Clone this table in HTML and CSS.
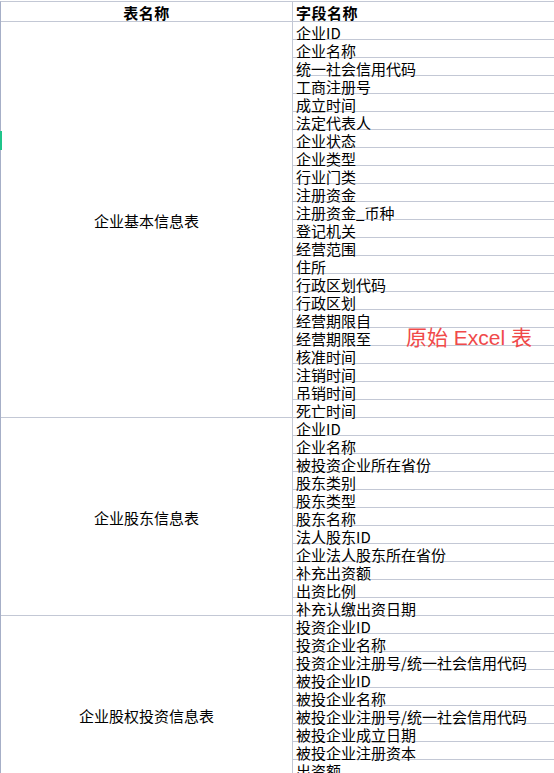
FILE: index.html
```html
<!DOCTYPE html>
<html lang="zh-CN">
<head>
<meta charset="utf-8">
<title>原始 Excel 表</title>
<link rel="stylesheet" href="styles.css">
</head>
<body>
<div class="sheet">
  <div class="row-head">
    <div class="cell-a head-a">表名称</div>
    <div class="cell-b head-b">字段名称</div>
  </div>

  <div class="group">
    <div class="label">企业基本信息表</div>
    <div class="fields">
      <div class="field">企业ID</div>
      <div class="field">企业名称</div>
      <div class="field">统一社会信用代码</div>
      <div class="field">工商注册号</div>
      <div class="field">成立时间</div>
      <div class="field">法定代表人</div>
      <div class="field">企业状态</div>
      <div class="field">企业类型</div>
      <div class="field">行业门类</div>
      <div class="field">注册资金</div>
      <div class="field">注册资金_币种</div>
      <div class="field">登记机关</div>
      <div class="field">经营范围</div>
      <div class="field">住所</div>
      <div class="field">行政区划代码</div>
      <div class="field">行政区划</div>
      <div class="field">经营期限自</div>
      <div class="field">经营期限至</div>
      <div class="field">核准时间</div>
      <div class="field">注销时间</div>
      <div class="field">吊销时间</div>
      <div class="field">死亡时间</div>
    </div>
  </div>

  <div class="group">
    <div class="label">企业股东信息表</div>
    <div class="fields">
      <div class="field">企业ID</div>
      <div class="field">企业名称</div>
      <div class="field">被投资企业所在省份</div>
      <div class="field">股东类别</div>
      <div class="field">股东类型</div>
      <div class="field">股东名称</div>
      <div class="field">法人股东ID</div>
      <div class="field">企业法人股东所在省份</div>
      <div class="field">补充出资额</div>
      <div class="field">出资比例</div>
      <div class="field">补充认缴出资日期</div>
    </div>
  </div>

  <div class="group">
    <div class="label">企业股权投资信息表</div>
    <div class="fields">
      <div class="field">投资企业ID</div>
      <div class="field">投资企业名称</div>
      <div class="field">投资企业注册号/统一社会信用代码</div>
      <div class="field">被投企业ID</div>
      <div class="field">被投企业名称</div>
      <div class="field">被投企业注册号/统一社会信用代码</div>
      <div class="field">被投企业成立日期</div>
      <div class="field">被投企业注册资本</div>
      <div class="field">出资额</div>
      <div class="field">出资比例</div>
      <div class="field">认缴出资日期</div>
    </div>
  </div>
</div>
<div class="row-marker"></div>
<div class="note">原始 Excel 表</div>
</body>
</html>
```

FILE: styles.css
```css
html, body {
  margin: 0;
  padding: 0;
  background: #ffffff;
}
body {
  width: 554px;
  height: 773px;
  overflow: hidden;
  position: relative;
  font-family: "Noto Sans CJK SC", "Noto Sans", sans-serif;
  font-size: 15px;
  color: #000000;
  padding-top: 1px;
  box-sizing: border-box;
}
.sheet {
  width: 640px;
  border-top: 1px solid #c3c8d5;
  border-left: 1px solid #a6afc7;
}
.row-head {
  display: grid;
  grid-template-columns: 292px 1fr;
  height: 19px;
  border-bottom: 1px solid #c3c8d5;
  box-sizing: content-box;
}
.cell-a {
  border-right: 1px solid #c3c8d5;
}
.head-a {
  font-weight: bold;
  text-align: center;
  line-height: 21px;
  letter-spacing: 0.5px;
}
.head-b {
  font-weight: bold;
  padding-left: 3px;
  line-height: 21px;
  letter-spacing: 0.5px;
}
.group {
  display: grid;
  grid-template-columns: 292px 1fr;
}
.label {
  border-right: 1px solid #c3c8d5;
  border-bottom: 1px solid #c3c8d5;
  display: flex;
  align-items: center;
  justify-content: center;
  padding-top: 2px;
  box-sizing: border-box;
}
.fields {
  display: flex;
  flex-direction: column;
}
.field {
  height: 18px;
  box-sizing: border-box;
  border-bottom: 1px solid #c3c8d5;
  padding-left: 3px;
  padding-top: 4px;
  line-height: 14px;
  white-space: nowrap;
}
.row-marker {
  position: absolute;
  left: 0;
  top: 131px;
  width: 2px;
  height: 19px;
  background: #1fc48a;
}
.note {
  position: absolute;
  left: 406px;
  top: 325px;
  font-family: "Liberation Sans", "Noto Sans CJK SC", sans-serif;
  font-size: 21px;
  line-height: 26px;
  color: #f04a4a;
  white-space: nowrap;
}
```
